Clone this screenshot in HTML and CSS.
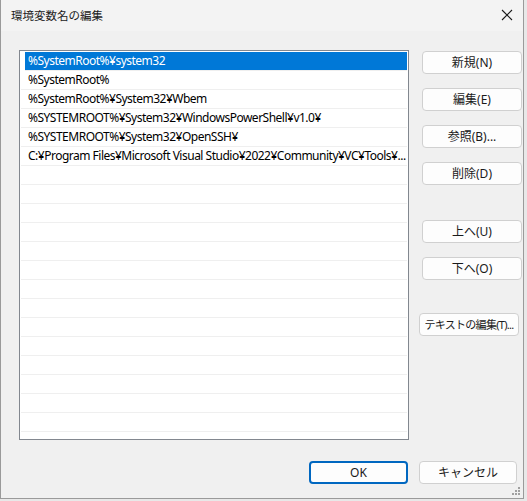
FILE: index.html
```html
<!DOCTYPE html>
<html lang="ja">
<head>
    <meta charset="UTF-8">
    <title>環境変数名の編集</title>
    <link rel="stylesheet" href="styles.css">
</head>
<body>
    <div class="dialog">
        <div class="titlebar">
            <span class="title">環境変数名の編集</span>
            <span class="close">
                <svg width="12" height="12" viewBox="0 0 12 12">
                    <path d="M1 1 L11 11 M11 1 L1 11" stroke="#1a1a1a" stroke-width="1.1" fill="none"/>
                </svg>
            </span>
        </div>
        <div class="content">
            <div class="main">
                <div class="pathlist">
                    <div class="row selected">%SystemRoot%¥system32</div>
                    <div class="row">%SystemRoot%</div>
                    <div class="row">%SystemRoot%¥System32¥Wbem</div>
                    <div class="row">%SYSTEMROOT%¥System32¥WindowsPowerShell¥v1.0¥</div>
                    <div class="row">%SYSTEMROOT%¥System32¥OpenSSH¥</div>
                    <div class="row">C:¥Program Files¥Microsoft Visual Studio¥2022¥Community¥VC¥Tools¥...</div>
                    <div class="row"></div>
                    <div class="row"></div>
                    <div class="row"></div>
                    <div class="row"></div>
                    <div class="row"></div>
                    <div class="row"></div>
                    <div class="row"></div>
                    <div class="row"></div>
                    <div class="row"></div>
                    <div class="row"></div>
                    <div class="row"></div>
                    <div class="row"></div>
                    <div class="row"></div>
                    <div class="row"></div>
                </div>
                <div class="actions">
                    <button class="btn">新規(N)</button>
                    <button class="btn">編集(E)</button>
                    <button class="btn">参照(B)...</button>
                    <button class="btn">削除(D)</button>
                    <button class="btn move-up">上へ(U)</button>
                    <button class="btn">下へ(O)</button>
                    <button class="btn edit-text">テキストの編集(T)...</button>
                </div>
            </div>
            <div class="footer">
                <button class="btn ok">OK</button>
                <button class="btn cancel">キャンセル</button>
            </div>
        </div>
        <div class="grip">
            <svg width="9" height="9" viewBox="0 0 9 9" fill="#a0a0a0">
                <rect x="6" y="0" width="2" height="2"/>
                <rect x="3" y="3" width="2" height="2"/>
                <rect x="6" y="3" width="2" height="2"/>
                <rect x="0" y="6" width="2" height="2"/>
                <rect x="3" y="6" width="2" height="2"/>
                <rect x="6" y="6" width="2" height="2"/>
            </svg>
        </div>
    </div>
</body>
</html>
```

FILE: styles.css
```css
body {
    margin: 0;
    background: #e8e8e8;
    font-family: "Noto Sans", "Noto Sans CJK JP", sans-serif;
    font-size: 12px;
    color: #000;
}
.dialog {
    position: relative;
    width: 524px;
    height: 499px;
    box-sizing: border-box;
    background-color: #f0f0f0;
    border: 1px solid #9a9a9a;
    border-top: none;
    display: flex;
    flex-direction: column;
}
.titlebar {
    height: 31px;
    background-color: #f3f3f3;
    display: flex;
    align-items: center;
    justify-content: space-between;
    padding: 0 9px 0 10px;
}
.title {
    font-family: "Noto Sans CJK JP", sans-serif;
    font-size: 11.5px;
    color: #1a1a1a;
    margin-top: -1px;
}
.close {
    display: flex;
    margin-right: 1px;
    margin-top: -1px;
}
.content {
    flex-grow: 1;
    display: flex;
    flex-direction: column;
    padding: 19px 0 0 18px;
}
.main {
    display: flex;
    align-items: flex-start;
}
.pathlist {
    width: 390px;
    height: 390px;
    box-sizing: border-box;
    border: 1px solid #82878f;
    background: #fff;
    padding: 1px 1px 0 1px;
    overflow: hidden;
}
.row {
    height: 18px;
    line-height: 18px;
    border-bottom: 1px solid #efefef;
    padding: 0 2px 0 7px;
    white-space: nowrap;
    letter-spacing: -0.5px;
}
.row.selected {
    background-color: #0078d7;
    color: #fff;
    margin-left: 4px;
    padding-left: 3px;
}
.actions {
    display: flex;
    flex-direction: column;
    gap: 14px;
    margin-left: 13px;
    margin-top: 1px;
}
.btn {
    width: 100px;
    height: 23px;
    box-sizing: border-box;
    border: 1px solid #d0d0d0;
    border-radius: 4px;
    background: #fdfdfd;
    font-family: "Noto Sans", "Noto Sans CJK JP", sans-serif;
    font-size: 12px;
    color: #1a1a1a;
    padding: 0;
    line-height: 20px;
    white-space: nowrap;
}
.move-up {
    margin-top: 21px;
}
.edit-text {
    margin-top: 19px;
    margin-left: -3px;
    font-size: 11px;
    letter-spacing: -0.7px;
}
.footer {
    display: flex;
    justify-content: flex-end;
    gap: 11px;
    margin-top: 21px;
    padding-right: 6px;
}
.ok {
    width: 99px;
    border: 2px solid #0067c0;
}
.cancel {
    width: 98px;
}
.grip {
    position: absolute;
    right: 2px;
    bottom: 2px;
    display: flex;
}
```
